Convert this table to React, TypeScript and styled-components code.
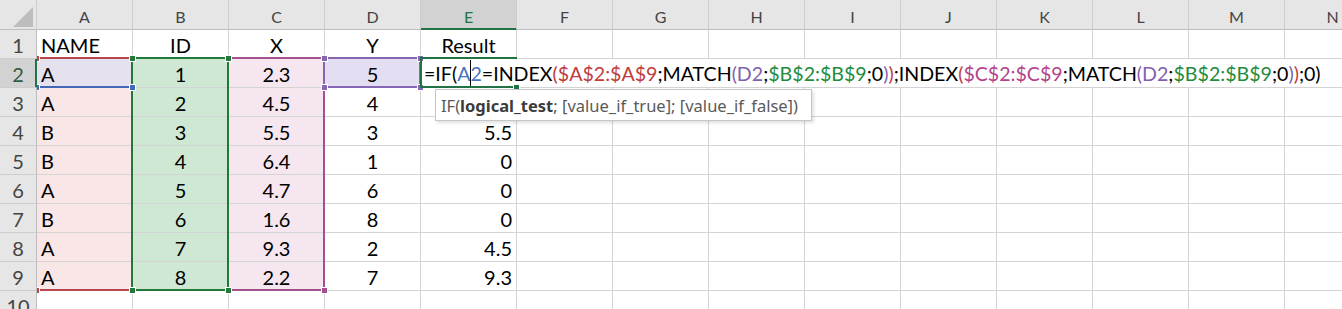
import React from 'react';
import styled, { createGlobalStyle } from 'styled-components';

const GlobalStyle = createGlobalStyle`
  html, body { margin: 0; padding: 0; background: #fff; overflow: hidden; }
  body { width: 1342px; height: 309px; }
`;

const GRID = '#d4d4d4';
const HEAD_LINE = '#cdcdcd';
const HEAD_BG = '#e6e6e6';
const HEAD_BG_ACTIVE = '#d2d2d2';
const ACTIVE = '#217346';

const C = {
  k: '#000000',
  blue: '#4472c4',
  red: '#c13b3b',
  purple: '#8061b0',
  green: '#1e8c3c',
  magenta: '#b4428a',
};

const Sheet = styled.div`
  position: relative;
  display: grid;
  grid-template-columns: 37px repeat(14, 96px);
  grid-template-rows: 30px repeat(10, 29px);
  width: 1342px;
  height: 309px;
  overflow: hidden;
  background: #fff;
  font-family: Lato, 'Liberation Sans', sans-serif;
  color: #000;
`;

const Corner = styled.div`
  display: flex;
  align-items: flex-end;
  justify-content: flex-end;
  padding: 0 3px 2px 0;
  background: ${HEAD_BG};
  border-right: 1px solid ${HEAD_LINE};
  border-bottom: 1px solid #bdbdbd;
`;

const ColHeader = styled.div<{ $active?: boolean }>`
  display: flex;
  align-items: center;
  justify-content: center;
  padding-top: 3px;
  background: ${(p) => (p.$active ? HEAD_BG_ACTIVE : HEAD_BG)};
  border-right: 1px solid ${HEAD_LINE};
  border-bottom: 1px solid ${(p) => (p.$active ? ACTIVE : '#bdbdbd')};
  box-shadow: ${(p) => (p.$active ? `inset 0 -1px 0 ${ACTIVE}` : 'none')};
  color: ${(p) => (p.$active ? ACTIVE : '#444')};
  font-size: 16px;
`;

const RowHeader = styled.div<{ $active?: boolean }>`
  display: flex;
  align-items: center;
  justify-content: center;
  padding-top: 1px;
  background: ${(p) => (p.$active ? HEAD_BG_ACTIVE : HEAD_BG)};
  border-right: 1px solid ${(p) => (p.$active ? ACTIVE : '#bdbdbd')};
  border-bottom: 1px solid ${HEAD_LINE};
  box-shadow: ${(p) => (p.$active ? `inset -1px 0 0 ${ACTIVE}` : 'none')};
  color: ${(p) => (p.$active ? '#2f5a40' : '#444')};
  font-size: 20px;
`;

type Align = 'left' | 'center' | 'right';

const Cell = styled.div<{ $fill?: string; $align?: Align }>`
  display: flex;
  align-items: center;
  justify-content: ${(p) =>
    p.$align === 'right' ? 'flex-end' : p.$align === 'center' ? 'center' : 'flex-start'};
  padding: 1px 4px 0 4px;
  background: ${(p) => p.$fill ?? '#fff'};
  border-right: 1px solid ${GRID};
  border-bottom: 1px solid ${GRID};
  font-size: 20px;
  white-space: nowrap;
  min-width: 0;
`;

const EditCell = styled(Cell)`
  position: relative;
`;

const Editor = styled.div`
  position: absolute;
  left: 0;
  top: 0;
  bottom: 0;
  min-width: 921px;
  display: flex;
  align-items: center;
  padding: 1px 0 0 3px;
  background: #fff;
  font-size: 19.6px;
  white-space: nowrap;
  z-index: 1;
`;

const Token = styled.span<{ $color: string }>`
  flex-shrink: 0;
  color: ${(p) => p.$color};
`;

const Caret = styled.span`
  display: inline-block;
  flex-shrink: 0;
  align-self: flex-end;
  width: 1px;
  height: 27px;
  margin-right: -1px;
  background: #000;
`;

const Tooltip = styled.div`
  position: absolute;
  left: 14px;
  top: 30px;
  z-index: 5;
  display: flex;
  align-items: center;
  height: 32px;
  box-sizing: border-box;
  padding: 0 13px 0 5px;
  background: #fff;
  border: 1px solid #c6c6c6;
  box-shadow: 2px 2px 3px rgba(0, 0, 0, 0.12);
  font-family: 'Noto Sans', 'Open Sans', sans-serif;
  font-size: 16.5px;
  color: #5a5a5a;
  white-space: nowrap;
`;

const TipArg = styled.span`
  font-weight: 700;
  color: #3c3c3c;
`;

const Overlay = styled.div`
  position: absolute;
  left: 37px;
  top: 30px;
  right: 0;
  bottom: 0;
  overflow: hidden;
  pointer-events: none;
  z-index: 2;
`;

const RangeBox = styled.div<{
  $color: string;
  $x: number;
  $y: number;
  $w: number;
  $h: number;
  $t: boolean;
  $r: boolean;
  $b: boolean;
  $l: boolean;
}>`
  position: absolute;
  box-sizing: border-box;
  left: ${(p) => p.$x}px;
  top: ${(p) => p.$y}px;
  width: ${(p) => p.$w}px;
  height: ${(p) => p.$h}px;
  border-style: solid;
  border-color: ${(p) => p.$color};
  border-width: ${(p) => `${p.$t ? 2 : 0}px ${p.$r ? 2 : 0}px ${p.$b ? 2 : 0}px ${p.$l ? 2 : 0}px`};
`;

const Handle = styled.div<{ $color: string; $x: number; $y: number }>`
  position: absolute;
  left: ${(p) => p.$x}px;
  top: ${(p) => p.$y}px;
  width: 5px;
  height: 5px;
  background: ${(p) => p.$color};
  box-shadow: 0 0 0 1px #fff;
`;

const COLS = 'ABCDEFGHIJKLMN'.split('');
const OX = 37;
const OY = 30;
const colX = (c: number) => 36 + 96 * c - OX;
const rowY = (r: number) => 29 + 29 * (r - 1) - OY;

type Range = {
  c1: number;
  r1: number;
  c2: number;
  r2: number;
  color: string;
  sides: string;
};

const ranges: Range[] = [
  { c1: 0, r1: 2, c2: 0, r2: 2, color: '#4169b8', sides: 'trb' },
  { c1: 0, r1: 2, c2: 0, r2: 9, color: '#b5474a', sides: 'trb' },
  { c1: 2, r1: 2, c2: 2, r2: 9, color: '#a4508f', sides: 'trbl' },
  { c1: 1, r1: 2, c2: 1, r2: 9, color: '#217a39', sides: 'trbl' },
  { c1: 3, r1: 2, c2: 3, r2: 2, color: '#8767b3', sides: 'trbl' },
];

const boxOf = (g: Range) => {
  const x1 = colX(g.c1);
  const x2 = colX(g.c2 + 1);
  const y1 = rowY(g.r1);
  const y2 = rowY(g.r2 + 1);
  return { x1, x2, y1, y2 };
};

type CellSpec = { text: string; align: Align; fill?: string };

const PINK = '#f9e6e6';
const LAV = '#e6e1ee';
const GREENF = '#cee8d4';
const PLUM = '#f5e6f0';
const LILAC = '#e4def2';

const data: { name: string; id: string; x: string; y: string; res: string }[] = [
  { name: 'A', id: '1', x: '2.3', y: '5', res: '' },
  { name: 'A', id: '2', x: '4.5', y: '4', res: '' },
  { name: 'B', id: '3', x: '5.5', y: '3', res: '5.5' },
  { name: 'B', id: '4', x: '6.4', y: '1', res: '0' },
  { name: 'A', id: '5', x: '4.7', y: '6', res: '0' },
  { name: 'B', id: '6', x: '1.6', y: '8', res: '0' },
  { name: 'A', id: '7', x: '9.3', y: '2', res: '4.5' },
  { name: 'A', id: '8', x: '2.2', y: '7', res: '9.3' },
];

const formula: [string, string][] = [
  ['=IF(', C.k],
  ['A', C.blue],
  ['|', ''],
  ['2', C.blue],
  ['=INDEX', C.k],
  ['(', C.red],
  ['$A$2:$A$9', C.red],
  [';MATCH', C.k],
  ['(', C.purple],
  ['D2', C.purple],
  [';', C.k],
  ['$B$2:$B$9', C.green],
  [';0', C.k],
  [')', C.purple],
  [')', C.red],
  [';INDEX', C.k],
  ['(', C.red],
  ['$C$2:$C$9', C.magenta],
  [';MATCH', C.k],
  ['(', C.purple],
  ['D2', C.purple],
  [';', C.k],
  ['$B$2:$B$9', C.green],
  [';0', C.k],
  [')', C.purple],
  [')', C.red],
  [';0)', C.k],
];

const rowsSpec = (): CellSpec[][] => {
  const out: CellSpec[][] = [];
  out.push([
    { text: 'NAME', align: 'left' },
    { text: 'ID', align: 'center' },
    { text: 'X', align: 'center' },
    { text: 'Y', align: 'center' },
    { text: 'Result', align: 'center' },
  ]);
  data.forEach((d, i) => {
    out.push([
      { text: d.name, align: 'left', fill: i === 0 ? LAV : PINK },
      { text: d.id, align: 'center', fill: GREENF },
      { text: d.x, align: 'center', fill: PLUM },
      { text: d.y, align: 'center', fill: i === 0 ? LILAC : undefined },
      { text: d.res, align: 'right' },
    ]);
  });
  out.push([]);
  return out;
};

const CornerTriangle = () => (
  <svg width="20" height="20" viewBox="0 0 20 20">
    <polygon points="20,0 20,20 0,20" fill="#bdbdbd" />
  </svg>
);

export default function App() {
  const rows = rowsSpec();
  return (
    <>
      <GlobalStyle />
      <Sheet>
        <Corner>
          <CornerTriangle />
        </Corner>
        {COLS.map((c) => (
          <ColHeader key={c} $active={c === 'E'}>
            {c}
          </ColHeader>
        ))}
        {rows.map((cells, ri) => {
          const rowNum = ri + 1;
          return (
            <React.Fragment key={rowNum}>
              <RowHeader $active={rowNum === 2}>{rowNum}</RowHeader>
              {COLS.map((c, ci) => {
                const spec = cells[ci];
                if (rowNum === 2 && ci === 4) {
                  return (
                    <EditCell key={c}>
                      <Editor>
                        {formula.map(([t, col], i) =>
                          t === '|' ? (
                            <Caret key={i} />
                          ) : (
                            <Token key={i} $color={col}>
                              {t}
                            </Token>
                          )
                        )}
                      </Editor>
                      <Tooltip>
                        IF(<TipArg>logical_test</TipArg>; [value_if_true]; [value_if_false])
                      </Tooltip>
                    </EditCell>
                  );
                }
                return (
                  <Cell key={c} $fill={spec?.fill} $align={spec?.align}>
                    {spec?.text}
                  </Cell>
                );
              })}
            </React.Fragment>
          );
        })}
        <Overlay>
          {ranges.map((g, i) => {
            const { x1, x2, y1, y2 } = boxOf(g);
            return (
              <RangeBox
                key={`b${i}`}
                $color={g.color}
                $x={x1 - 1}
                $y={y1 - 1}
                $w={x2 - x1 + 2}
                $h={y2 - y1 + 2}
                $t={g.sides.includes('t')}
                $r={g.sides.includes('r')}
                $b={g.sides.includes('b')}
                $l={g.sides.includes('l')}
              />
            );
          })}
          {ranges.map((g, i) => {
            const { x1, x2, y1, y2 } = boxOf(g);
            const pts: [number, number][] = [
              [x1, y1],
              [x2, y1],
              [x1, y2],
              [x2, y2],
            ];
            return pts.map(([x, y], j) => (
              <Handle key={`h${i}-${j}`} $color={g.color} $x={x - 2} $y={y - 2} />
            ));
          })}
          <RangeBox
            $color={ACTIVE}
            $x={colX(4)}
            $y={rowY(2) - 1}
            $w={97}
            $h={31}
            $t
            $r={false}
            $b
            $l
          />
          <Handle $color={ACTIVE} $x={colX(5) - 2} $y={rowY(3) - 2} />
        </Overlay>
      </Sheet>
    </>
  );
}
